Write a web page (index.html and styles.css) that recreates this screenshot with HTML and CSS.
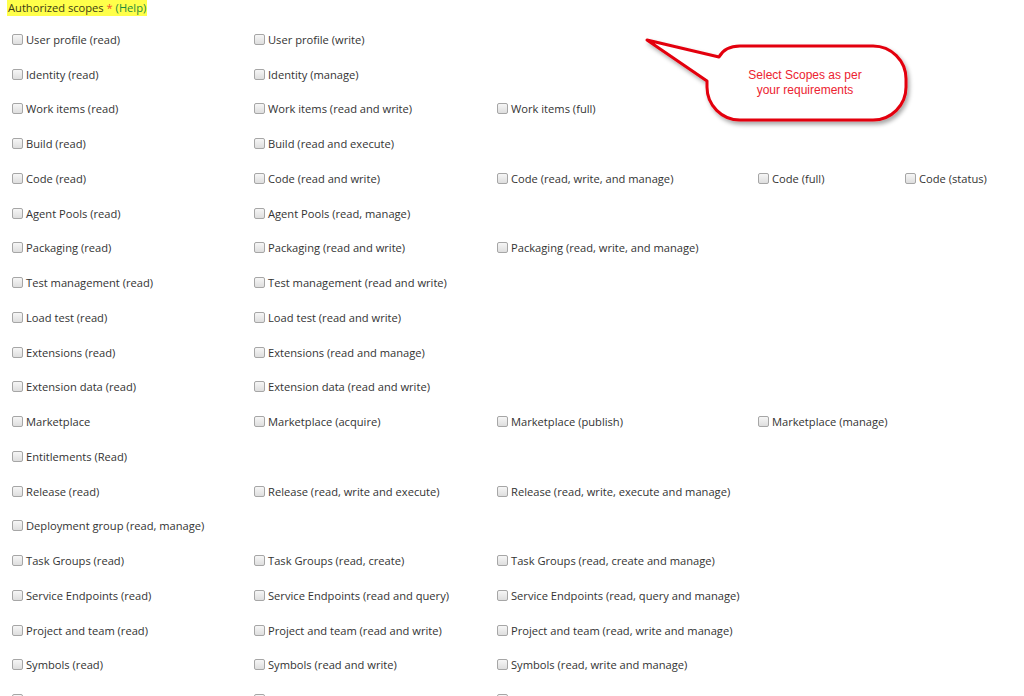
FILE: index.html
```html
<!DOCTYPE html>
<html lang="en">
<head>
  <meta charset="UTF-8" />
  <title>Authorized scopes</title>
  <link rel="stylesheet" href="styles.css">
</head>
<body>
  <div class="scopes-header">
    <span class="highlight">Authorized scopes <span class="required">*</span> <a class="help-link" href="#">(Help)</a></span>
  </div>

  <div class="scope-list">
    <div class="scope-row">
      <label class="scope"><input type="checkbox"> User profile (read)</label>
      <label class="scope"><input type="checkbox"> User profile (write)</label>
    </div>
    <div class="scope-row">
      <label class="scope"><input type="checkbox"> Identity (read)</label>
      <label class="scope"><input type="checkbox"> Identity (manage)</label>
    </div>
    <div class="scope-row">
      <label class="scope"><input type="checkbox"> Work items (read)</label>
      <label class="scope"><input type="checkbox"> Work items (read and write)</label>
      <label class="scope"><input type="checkbox"> Work items (full)</label>
    </div>
    <div class="scope-row">
      <label class="scope"><input type="checkbox"> Build (read)</label>
      <label class="scope"><input type="checkbox"> Build (read and execute)</label>
    </div>
    <div class="scope-row">
      <label class="scope"><input type="checkbox"> Code (read)</label>
      <label class="scope"><input type="checkbox"> Code (read and write)</label>
      <label class="scope"><input type="checkbox"> Code (read, write, and manage)</label>
      <label class="scope"><input type="checkbox"> Code (full)</label>
      <label class="scope"><input type="checkbox"> Code (status)</label>
    </div>
    <div class="scope-row">
      <label class="scope"><input type="checkbox"> Agent Pools (read)</label>
      <label class="scope"><input type="checkbox"> Agent Pools (read, manage)</label>
    </div>
    <div class="scope-row">
      <label class="scope"><input type="checkbox"> Packaging (read)</label>
      <label class="scope"><input type="checkbox"> Packaging (read and write)</label>
      <label class="scope"><input type="checkbox"> Packaging (read, write, and manage)</label>
    </div>
    <div class="scope-row">
      <label class="scope"><input type="checkbox"> Test management (read)</label>
      <label class="scope"><input type="checkbox"> Test management (read and write)</label>
    </div>
    <div class="scope-row">
      <label class="scope"><input type="checkbox"> Load test (read)</label>
      <label class="scope"><input type="checkbox"> Load test (read and write)</label>
    </div>
    <div class="scope-row">
      <label class="scope"><input type="checkbox"> Extensions (read)</label>
      <label class="scope"><input type="checkbox"> Extensions (read and manage)</label>
    </div>
    <div class="scope-row">
      <label class="scope"><input type="checkbox"> Extension data (read)</label>
      <label class="scope"><input type="checkbox"> Extension data (read and write)</label>
    </div>
    <div class="scope-row">
      <label class="scope"><input type="checkbox"> Marketplace</label>
      <label class="scope"><input type="checkbox"> Marketplace (acquire)</label>
      <label class="scope"><input type="checkbox"> Marketplace (publish)</label>
      <label class="scope"><input type="checkbox"> Marketplace (manage)</label>
    </div>
    <div class="scope-row">
      <label class="scope"><input type="checkbox"> Entitlements (Read)</label>
    </div>
    <div class="scope-row">
      <label class="scope"><input type="checkbox"> Release (read)</label>
      <label class="scope"><input type="checkbox"> Release (read, write and execute)</label>
      <label class="scope"><input type="checkbox"> Release (read, write, execute and manage)</label>
    </div>
    <div class="scope-row">
      <label class="scope"><input type="checkbox"> Deployment group (read, manage)</label>
    </div>
    <div class="scope-row">
      <label class="scope"><input type="checkbox"> Task Groups (read)</label>
      <label class="scope"><input type="checkbox"> Task Groups (read, create)</label>
      <label class="scope"><input type="checkbox"> Task Groups (read, create and manage)</label>
    </div>
    <div class="scope-row">
      <label class="scope"><input type="checkbox"> Service Endpoints (read)</label>
      <label class="scope"><input type="checkbox"> Service Endpoints (read and query)</label>
      <label class="scope"><input type="checkbox"> Service Endpoints (read, query and manage)</label>
    </div>
    <div class="scope-row">
      <label class="scope"><input type="checkbox"> Project and team (read)</label>
      <label class="scope"><input type="checkbox"> Project and team (read and write)</label>
      <label class="scope"><input type="checkbox"> Project and team (read, write and manage)</label>
    </div>
    <div class="scope-row">
      <label class="scope"><input type="checkbox"> Symbols (read)</label>
      <label class="scope"><input type="checkbox"> Symbols (read and write)</label>
      <label class="scope"><input type="checkbox"> Symbols (read, write and manage)</label>
    </div>
    <div class="scope-row">
      <label class="scope"><input type="checkbox"> Variable Groups (read)</label>
      <label class="scope"><input type="checkbox"> Variable Groups (read, create)</label>
      <label class="scope"><input type="checkbox"> Variable Groups (read, create and manage)</label>
    </div>
  </div>

  <!-- Annotation callout -->
  <svg class="callout" width="280" height="100" viewBox="640 30 280 100">
    <defs>
      <filter id="shadow" x="-10%" y="-10%" width="130%" height="140%">
        <feDropShadow dx="2" dy="3" stdDeviation="2" flood-color="#000" flood-opacity="0.35"/>
      </filter>
    </defs>
    <path d="M 740 46 H 873 A 33 33 0 0 1 906 79 V 87 A 33 33 0 0 1 873 120 H 740 A 33 33 0 0 1 707 87 V 81 L 647 40 L 719 57 Q 725 46 740 46 Z"
          fill="#fff" stroke="#e3000f" stroke-width="3" stroke-linejoin="round" filter="url(#shadow)"/>
    <text x="805" y="79" class="callout-text">Select Scopes as per</text>
    <text x="805" y="94" class="callout-text">your requirements</text>
  </svg>
</body>
</html>
```

FILE: styles.css
```css
body {
  margin: 0;
  font-family: 'Open Sans', 'Noto Sans', sans-serif;
  font-size: 11.15px;
  color: #333;
  background-color: #fff;
  position: relative;
}

.scopes-header {
  padding-left: 7px;
  height: 16px;
  line-height: 16px;
}

.highlight {
  display: inline-block;
  background-color: #ffff4a;
  color: #3c3c14;
  padding: 0 1px;
}

.required {
  color: #f0502a;
}

.help-link {
  color: #1f8a3c;
  text-decoration: none;
}

.scope-list {
  padding: 6px 0 0 12px;
}

.scope-row {
  display: grid;
  grid-template-columns: 242px 243px 261px 147px 1fr;
  height: 34.75px;
  align-items: center;
}

.scope {
  display: flex;
  align-items: center;
  white-space: nowrap;
}

.scope input {
  appearance: none;
  -webkit-appearance: none;
  width: 11px;
  height: 11px;
  margin: 0 3px 0 0;
  border: 1px solid #a6a6a6;
  border-radius: 2px;
  background: linear-gradient(#f6f6f6, #dedede);
}

.callout {
  position: absolute;
  left: 640px;
  top: 30px;
}

.callout-text {
  font-family: 'Liberation Sans', Arial, sans-serif;
  font-size: 12px;
  fill: #ec2230;
  text-anchor: middle;
}
```
